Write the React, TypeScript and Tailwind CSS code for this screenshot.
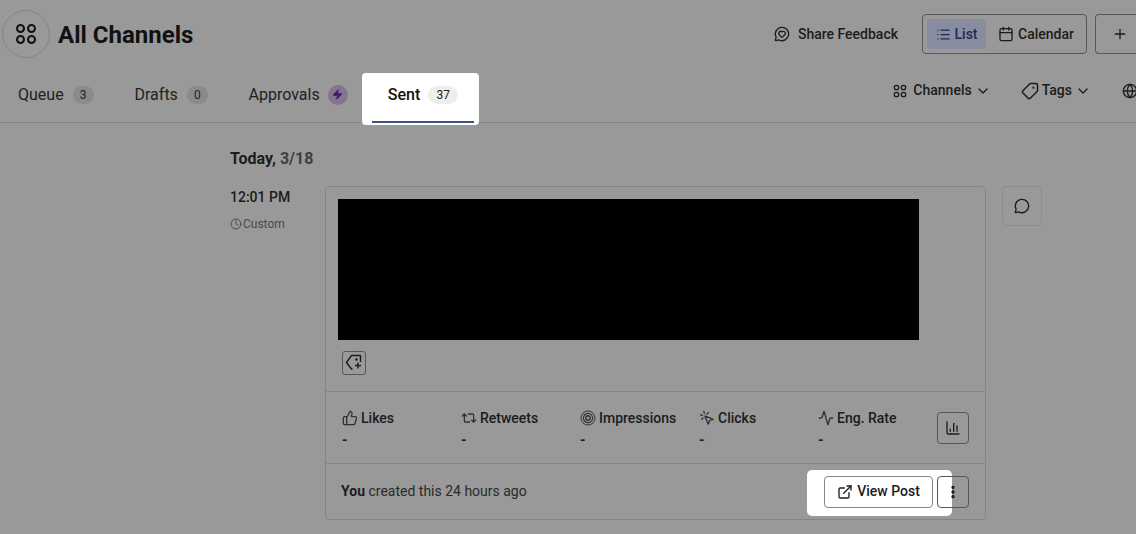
import {
  Activity,
  Calendar,
  ChartColumn,
  ChevronDown,
  Clock,
  EllipsisVertical,
  ExternalLink,
  Globe,
  List,
  MessageCircle,
  MessageCircleHeart,
  MousePointerClick,
  Plus,
  Repeat2,
  Tag,
  ThumbsUp,
  Zap,
} from 'lucide-react';
import type { ReactNode } from 'react';

const FourCircles = ({ className }: { className?: string }) => (
  <svg className={className} viewBox="0 0 24 24" fill="none" stroke="currentColor" strokeWidth="2.2">
    <circle cx="6" cy="6" r="3.8" />
    <circle cx="18" cy="6" r="3.8" />
    <circle cx="6" cy="18" r="3.8" />
    <circle cx="18" cy="18" r="3.8" />
  </svg>
);

const TagPlus = () => (
  <svg className="w-[20px] h-[20px]" viewBox="0 0 20 20" fill="none" stroke="currentColor" strokeWidth="1.4">
    <path d="M8.5 16 H7.5 L2.5 9.5 L7.5 2.5 H16.5 V9" strokeLinejoin="round" />
    <circle cx="12.5" cy="6.5" r="0.6" />
    <path d="M14 9.5 V15.5 M11 12.5 H17" />
  </svg>
);

const Target = () => (
  <svg className="w-[16px] h-[16px]" viewBox="0 0 16 16" fill="none" stroke="currentColor">
    <circle cx="8" cy="8" r="7" strokeWidth="1" />
    <circle cx="8" cy="8" r="4.6" strokeWidth="1.2" />
    <circle cx="8" cy="8" r="2.2" strokeWidth="1.4" />
  </svg>
);

type TabProps = { label: string; badge?: string; width: string };

const Tab = ({ label, badge, width }: TabProps) => (
  <div className={`flex items-center gap-[9px] ${width}`}>
    <span className="text-[16px] text-[#222]">{label}</span>
    {badge && (
      <span className="h-[18px] min-w-[21px] px-[6px] rounded-full bg-[#8a8a8a] text-[12px] leading-[18px] text-center text-[#222]">
        {badge}
      </span>
    )}
  </div>
);

const Metric = ({ icon, label }: { icon: ReactNode; label: string }) => (
  <div className="w-[119px] shrink-0">
    <div className="flex items-center gap-[3px] h-[20px] text-[14px] font-medium text-[#1c1c1c]">
      <span className="text-[#333]">{icon}</span>
      {label}
    </div>
    <div className="mt-[2px] text-[14px] font-bold leading-[20px] text-[#1c1c1c]">-</div>
  </div>
);

export default function App() {
  return (
    <div className="w-[1136px] h-[534px] overflow-hidden bg-[#999999] font-['Roboto',sans-serif]">
      <header className="h-[68px] flex items-center pl-[2px] whitespace-nowrap">
        <div className="w-[48px] h-[48px] rounded-full border border-[#858585] flex items-center justify-center text-[#111]">
          <FourCircles className="w-[22px] h-[22px]" />
        </div>
        <h1 className="ml-[8px] mt-[2px] text-[24px] font-bold text-[#111]">All Channels</h1>
        <div className="ml-auto flex items-center text-[#1c1c1c]">
          <MessageCircleHeart className="w-[16px] h-[16px]" />
          <span className="ml-[8px] text-[14px] font-medium">Share Feedback</span>
          <div className="ml-[24px] w-[165px] h-[40px] rounded-[4px] border border-[#585858] flex items-center pl-[4px]">
            <div className="w-[59px] h-[30px] rounded-[4px] bg-[#878d9f] flex items-center justify-center gap-[4px] text-[#1f2b52] text-[14px] font-medium">
              <List className="w-[15px] h-[15px]" />
              List
            </div>
            <div className="ml-[12px] flex items-center gap-[4px] text-[14px] font-medium">
              <Calendar className="w-[16px] h-[16px]" />
              Calendar
            </div>
          </div>
          <div className="ml-[8px] w-[41px] h-[40px] rounded-l-[4px] border-y border-l border-[#585858] flex items-center pl-[16px]">
            <Plus className="w-[16px] h-[16px]" />
          </div>
        </div>
      </header>

      <nav className="relative h-[55px] border-b border-[#858585] flex items-center pl-[18px] pb-[1px] whitespace-nowrap">
        <Tab label="Queue" badge="3" width="w-[116.5px]" />
        <Tab label="Drafts" badge="0" width="w-[114px]" />
        <div className="w-[114px] flex items-center gap-[8px]">
          <span className="text-[16px] text-[#222]">Approvals</span>
          <span className="w-[20px] h-[20px] rounded-full bg-[#84748f] flex items-center justify-center">
            <Zap className="w-[11px] h-[11px] text-[#3f1d72] fill-[#3f1d72]" />
          </span>
        </div>
        <div className="absolute left-[362px] top-[5px] w-[117px] h-[52px] bg-white rounded-[4px] px-[10px] pr-[5px]">
          <div className="h-[50px] pb-[5px] border-b-2 border-[#3d5380] flex items-center justify-center gap-[8px]">
            <span className="text-[16px] font-medium text-[#111]">Sent</span>
            <span className="h-[18px] min-w-[30px] px-[7px] rounded-full bg-[#eeeeee] text-[12px] leading-[18px] text-center text-[#222]">
              37
            </span>
          </div>
        </div>
        <div className="ml-auto mb-[8px] flex items-center text-[14px] font-medium text-[#1c1c1c]">
          <FourCircles className="w-[14px] h-[14px]" />
          <span className="ml-[6px]">Channels</span>
          <ChevronDown className="ml-[3px] w-[16px] h-[16px]" />
          <Tag className="ml-[30px] w-[18px] h-[18px] rotate-90" />
          <span className="ml-[3px]">Tags</span>
          <ChevronDown className="ml-[3px] w-[16px] h-[16px]" />
          <Globe className="ml-[31px] -mr-[2px] w-[16px] h-[16px]" />
        </div>
      </nav>

      <main className="pl-[230px]">
        <div className="h-[63px] pt-[27px] text-[16px] font-bold leading-[18px] text-[#1c1c1c]">
          Today, <span className="text-[#404040]">3/18</span>
        </div>
        <div className="flex items-start">
          <div className="w-[95px] shrink-0 pt-[2px]">
            <div className="text-[14px] font-medium leading-[18px] text-[#1c1c1c]">12:01 PM</div>
            <div className="mt-[10px] flex items-center gap-[1px] text-[12px] leading-[16px] text-[#4a4a4a]">
              <Clock className="w-[12px] h-[12px]" />
              Custom
            </div>
          </div>
          <section className="w-[661px] h-[334px] shrink-0 rounded-[4px] border border-[#858585] flex flex-col">
            <div className="h-[204px] px-[12px] pt-[12px]">
              <div className="w-[581px] h-[141px] bg-black" />
              <button className="mt-[11px] ml-[4px] w-[24px] h-[24px] rounded-[3px] border border-[#585858] flex items-center justify-center text-[#1c1c1c]">
                <TagPlus />
              </button>
            </div>
            <div className="h-[72px] border-t border-[#858585] flex pl-[16px] pt-[16px] relative">
              <Metric icon={<ThumbsUp className="w-[16px] h-[16px]" />} label="Likes" />
              <Metric icon={<Repeat2 className="w-[16px] h-[16px]" />} label="Retweets" />
              <Metric icon={<Target />} label="Impressions" />
              <Metric icon={<MousePointerClick className="w-[16px] h-[16px]" />} label="Clicks" />
              <Metric icon={<Activity className="w-[16px] h-[16px]" />} label="Eng. Rate" />
              <button className="absolute right-[16px] top-[20px] w-[32px] h-[32px] rounded-[4px] border border-[#585858] flex items-center justify-center text-[#1c1c1c]">
                <ChartColumn className="w-[16px] h-[16px]" />
              </button>
            </div>
            <footer className="relative flex-1 border-t border-[#858585] flex items-center pl-[15px] pr-[16px] text-[14px] text-[#2a2a2a]">
              <span>
                <b className="font-bold text-[#1c1c1c]">You</b> created this 24 hours ago
              </span>
              <div className="absolute left-[481px] top-[6px] w-[145px] h-[46px] rounded-[5px] bg-white" />
              <button className="relative ml-auto w-[109px] h-[32px] rounded-[4px] border border-[#858585] bg-white flex items-center justify-center gap-[4px] font-medium text-[#1c1c1c]">
                <ExternalLink className="w-[16px] h-[16px]" />
                View Post
              </button>
              <button className="relative ml-[4px] w-[32px] h-[32px] rounded-[4px] border border-[#585858] flex items-center justify-center text-[#111]">
                <EllipsisVertical className="w-[16px] h-[16px]" strokeWidth={3} />
              </button>
            </footer>
          </section>
          <button className="ml-[16px] w-[40px] h-[40px] rounded-[4px] border border-[#8c8c8c] flex items-center justify-center text-[#1c1c1c]">
            <MessageCircle className="w-[16px] h-[16px]" />
          </button>
        </div>
      </main>
    </div>
  );
}
